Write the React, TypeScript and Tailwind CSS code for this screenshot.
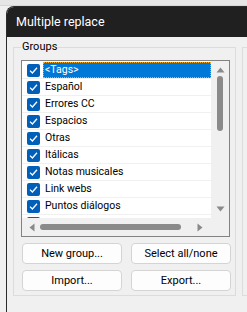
import React from "react";

const groups = [
  "<Tags>",
  "Español",
  "Errores CC",
  "Espacios",
  "Otras",
  "Itálicas",
  "Notas musicales",
  "Link webs",
  "Puntos diálogos",
];

function Check() {
  return (
    <span className="w-[13px] h-[13px] shrink-0 bg-[#005fb8] rounded-[2px] flex items-center justify-center">
      <svg width="9" height="9" viewBox="0 0 9 9" fill="none">
        <path d="M1 4.6 L3.4 7 L8 1.8" stroke="white" strokeWidth="1.3" />
      </svg>
    </span>
  );
}

function Btn({ label }: { label: string }) {
  return (
    <button className="w-[100px] h-[21px] bg-[#fdfdfd] border border-[#d4d4d4] rounded-[4px] text-[11px] text-black leading-none">
      {label}
    </button>
  );
}

export default function App() {
  return (
    <div
      className="w-[247px] h-[312px] bg-[#f0f0f0] flex flex-col overflow-hidden"
      style={{ fontFamily: "Roboto, 'Liberation Sans', sans-serif" }}
    >
      <div className="h-[6px] shrink-0 bg-[#e6e6e6] border-b border-[#d6d6d6]" />
      <div className="flex-1 ml-[6px] rounded-tl-[8px] border-l border-t border-[#2b2b2b] flex flex-col overflow-hidden">
        <div className="h-[30px] shrink-0 bg-[#202020] text-white text-[12.5px] flex items-center pl-[9px]">
          Multiple replace
        </div>
        <div className="flex-1 bg-[#f0f0f0] flex pl-[6px] pt-[10px] gap-[6px]">
          <div className="relative w-[223px] h-[249px] border border-[#dcdcdc] pt-[12px] pl-[7px] flex flex-col gap-[6px] shrink-0">
            <span className="absolute left-[7px] top-[-8px] bg-[#f0f0f0] px-[1px] text-[11px] leading-[14px] text-black">
              Groups
            </span>
            <div className="w-[209px] h-[177px] border border-[#828282] bg-[#f0f0f0] flex flex-col">
              <div className="flex h-[157px]">
                <div className="w-[189px] bg-white pt-[1px] overflow-hidden flex flex-col">
                  {groups.map((g, i) => (
                    <div
                      key={g}
                      className="h-[17px] shrink-0 flex items-center pl-[5px] border-b border-[#f0f0f0]"
                    >
                      <Check />
                      <span
                        className={
                          i === 0
                            ? "ml-[3px] flex-1 h-[16px] bg-[#0078d7] text-white outline outline-1 outline-dotted outline-[#f5a623] -outline-offset-1 pl-[2px] text-[10.5px] leading-[16px]"
                            : "ml-[3px] flex-1 pl-[2px] text-[10.5px] leading-[16px] text-black"
                        }
                      >
                        {g}
                      </span>
                    </div>
                  ))}
                  <div className="h-[17px] shrink-0 flex items-start pt-[2px] pl-[5px]">
                    <Check />
                  </div>
                </div>
                <div className="w-[18px] flex flex-col items-center py-[6px]">
                  <svg width="9" height="6" viewBox="0 0 9 6">
                    <path d="M0.5 5.5 L4.5 0.5 L8.5 5.5 Z" fill="#8a8a8a" />
                  </svg>
                  <div className="w-[6px] h-[55px] mt-[3px] rounded-full bg-[#8a8a8a]" />
                  <div className="flex-1" />
                  <svg width="9" height="6" viewBox="0 0 9 6">
                    <path d="M0.5 0.5 L4.5 5.5 L8.5 0.5 Z" fill="#8a8a8a" />
                  </svg>
                </div>
              </div>
              <div className="h-[18px] flex items-center pl-[7px]">
                <svg width="6" height="9" viewBox="0 0 6 9">
                  <path d="M5.5 0.5 L0.5 4.5 L5.5 8.5 Z" fill="#8a8a8a" />
                </svg>
                <div className="w-[141px] h-[6px] ml-[5px] rounded-full bg-[#8a8a8a]" />
                <svg className="ml-[16px]" width="6" height="9" viewBox="0 0 6 9">
                  <path d="M0.5 0.5 L5.5 4.5 L0.5 8.5 Z" fill="#8a8a8a" />
                </svg>
              </div>
            </div>
            <div className="flex gap-[9px] pl-[1px]">
              <Btn label="New group..." />
              <Btn label="Select all/none" />
            </div>
            <div className="flex gap-[9px] pl-[1px]">
              <Btn label="Import..." />
              <Btn label="Export..." />
            </div>
          </div>
          <div className="w-[20px] h-[249px] border border-[#dcdcdc] shrink-0" />
        </div>
      </div>
    </div>
  );
}
